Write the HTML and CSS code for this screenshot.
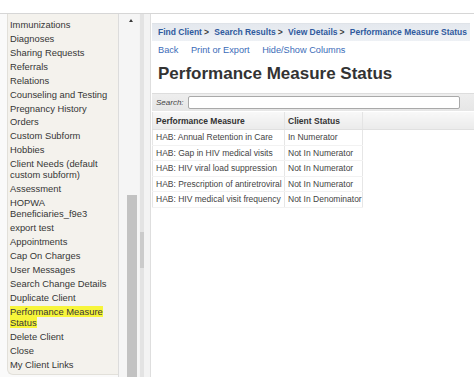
FILE: index.html
```html
<!DOCTYPE html>
<html lang="en">
<head>
    <meta charset="UTF-8">
    <title>Performance Measure Status</title>
    <link rel="stylesheet" href="styles.css">
</head>
<body>
    <div class="topbar"></div>

    <div class="layout">
        <div class="sidebar">
            <ul class="menu">
                <li>Immunizations</li>
                <li>Diagnoses</li>
                <li>Sharing Requests</li>
                <li>Referrals</li>
                <li>Relations</li>
                <li>Counseling and Testing</li>
                <li>Pregnancy History</li>
                <li>Orders</li>
                <li>Custom Subform</li>
                <li>Hobbies</li>
                <li>Client Needs (default custom subform)</li>
                <li>Assessment</li>
                <li>HOPWA Beneficiaries_f9e3</li>
                <li>export test</li>
                <li>Appointments</li>
                <li>Cap On Charges</li>
                <li>User Messages</li>
                <li>Search Change Details</li>
                <li>Duplicate Client</li>
                <li><span class="highlight">Performance Measure Status</span></li>
                <li>Delete Client</li>
                <li>Close</li>
                <li>My Client Links</li>
            </ul>
            <div class="menu-scroll">
                <span class="scroll-arrow"></span>
                <div class="scroll-thumb"></div>
            </div>
        </div>

        <div class="splitter">
            <div class="splitter-track">
                <div class="splitter-thumb"></div>
            </div>
        </div>

        <div class="main">
            <div class="breadcrumb">
                <a href="#">Find Client</a><span class="sep">&gt;</span>
                <a href="#">Search Results</a><span class="sep">&gt;</span>
                <a href="#">View Details</a><span class="sep">&gt;</span>
                <a href="#">Performance Measure Status</a>
            </div>

            <div class="actions">
                <a href="#">Back</a>
                <a href="#">Print or Export</a>
                <a href="#">Hide/Show Columns</a>
            </div>

            <h1>Performance Measure Status</h1>

            <div class="search-bar">
                <label for="search">Search:</label>
                <input type="text" id="search">
            </div>

            <table class="results">
                <colgroup>
                    <col class="col-measure">
                    <col class="col-status">
                    <col>
                </colgroup>
                <thead>
                    <tr>
                        <th>Performance Measure</th>
                        <th>Client Status</th>
                        <th></th>
                    </tr>
                </thead>
                <tbody>
                    <tr><td>HAB: Annual Retention in Care</td><td>In Numerator</td><td class="empty"></td></tr>
                    <tr><td>HAB: Gap in HIV medical visits</td><td>Not In Numerator</td><td class="empty"></td></tr>
                    <tr><td>HAB: HIV viral load suppression</td><td>Not In Numerator</td><td class="empty"></td></tr>
                    <tr><td>HAB: Prescription of antiretroviral</td><td>Not In Numerator</td><td class="empty"></td></tr>
                    <tr><td>HAB: HIV medical visit frequency</td><td>Not In Denominator</td><td class="empty"></td></tr>
                </tbody>
            </table>
        </div>
    </div>
</body>
</html>
```

FILE: styles.css
```css
body {
    margin: 0;
    font-family: "Liberation Sans", Arial, sans-serif;
    background-color: #ffffff;
    color: #333333;
    overflow: hidden;
}

.topbar {
    height: 13px;
    border-bottom: 1px solid #d6d6d6;
    background-color: #ffffff;
}

.layout {
    display: flex;
    height: 363px;
}

/* Left menu with its own scrollbar */
.sidebar {
    display: flex;
    flex-shrink: 0;
    padding-left: 7px;
    background-color: #fafafa;
}

.menu {
    list-style: none;
    margin: 0;
    padding: 4px 1px 0 2px;
    width: 111px;
    height: 361px;
    box-sizing: border-box;
    overflow: hidden;
    background-color: #f4f2ed;
    border-left: 1px solid #e2e0da;
    border-bottom: 1px solid #e2e0da;
    border-radius: 0 0 0 6px;
    font-size: 9.4px;
    color: #363636;
}

.menu li {
    padding: 1.6px 0;
    line-height: 10.8px;
}

.highlight {
    background-color: #f7f53a;
}

.menu-scroll {
    position: relative;
    width: 21px;
    border-left: 1px solid #dcdcdc;
    background-color: #f5f5f5;
    box-sizing: border-box;
}

.scroll-arrow {
    position: absolute;
    top: 5px;
    left: 10px;
    width: 0;
    height: 0;
    border-left: 2.5px solid transparent;
    border-right: 2.5px solid transparent;
    border-bottom: 3px solid #3a3a3a;
}

.scroll-thumb {
    margin: 181px 0 0 8px;
    width: 10px;
    height: 182px;
    background-color: #c2c2c2;
}

.splitter {
    display: flex;
    flex-shrink: 0;
    width: 12px;
    padding-left: 1px;
    background-color: #f3f3f3;
    border-right: 1px solid #dedede;
    box-sizing: border-box;
}

.splitter-track {
    width: 4px;
    background-color: #e3e3e3;
}

.splitter-thumb {
    margin-top: 218px;
    height: 36px;
    background-color: #cbcbcb;
}

/* Main content */
.main {
    flex: 1;
    min-width: 0;
    padding: 9px 0 0 1px;
    background-color: #ffffff;
}

.breadcrumb {
    margin-right: 4px;
    padding: 0 6px;
    height: 17px;
    line-height: 17px;
    font-size: 8.5px;
    font-weight: bold;
    white-space: nowrap;
    overflow: hidden;
    background: linear-gradient(#e4e8ee, #eef1f5);
    border-top: 1px solid #dfe3e8;
}

.breadcrumb a {
    color: #2f5a9e;
    text-decoration: none;
}

.breadcrumb .sep {
    margin: 0 3px 0 2px;
    color: #3c3c3c;
}

.actions {
    margin-top: 4px;
    padding-left: 6px;
    display: flex;
    gap: 12.5px;
    line-height: 10px;
    font-size: 9.2px;
}

.actions a {
    color: #3c6cb8;
    text-decoration: none;
}

h1 {
    margin: 9px 0 0;
    padding-left: 6px;
    font-size: 17px;
    line-height: 20px;
    font-weight: bold;
    color: #333333;
}

.search-bar {
    margin-top: 9px;
    display: flex;
    align-items: center;
    gap: 4px;
    height: 18px;
    padding: 0 14px 0 4px;
    background: linear-gradient(#eeeeee, #e6e6e6);
    border-top: 1px solid #dddddd;
    box-sizing: border-box;
}

.search-bar label {
    font-size: 8px;
    font-style: italic;
    color: #444444;
}

.search-bar input {
    flex: 1;
    min-width: 0;
    height: 13px;
    padding: 0 3px;
    border: 1px solid #a9a9a9;
    border-radius: 2px;
    box-sizing: border-box;
    background-color: #ffffff;
}

.results {
    margin-top: 1px;
    width: 100%;
    border-collapse: collapse;
    table-layout: fixed;
    font-size: 8.5px;
}

.col-measure {
    width: 132px;
}

.col-status {
    width: 78px;
}

.results th {
    height: 17px;
    padding: 0 3px;
    text-align: left;
    font-weight: bold;
    color: #333333;
    background: linear-gradient(#f8f8f8, #ebebeb);
    border-left: 1px solid #e4e4e4;
    border-bottom: 1px solid #e0e0e0;
}

.results td {
    height: 14.5px;
    padding: 0 3px;
    white-space: nowrap;
    overflow: hidden;
    color: #444444;
    border-left: 1px solid #e6e6e6;
    border-bottom: 1px solid #f2f2f2;
}

.results td.empty {
    border-bottom: none;
}
```
